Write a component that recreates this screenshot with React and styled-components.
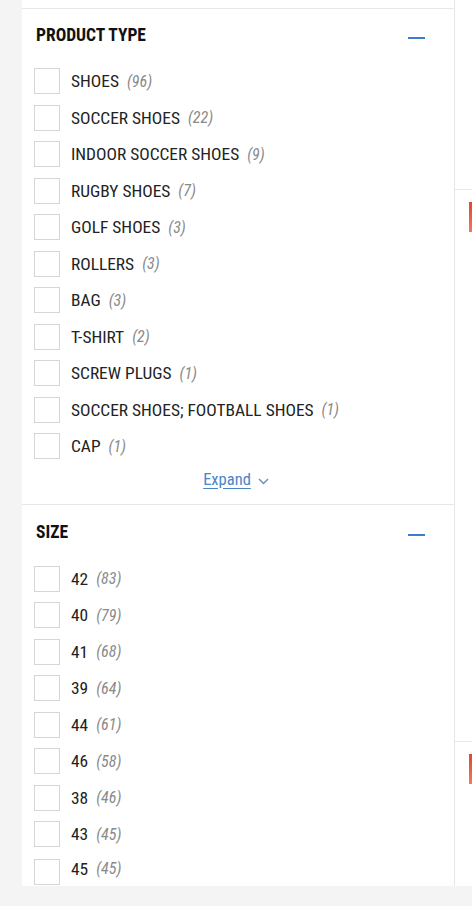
import React from 'react';
import styled, { createGlobalStyle } from 'styled-components';

const GlobalStyle = createGlobalStyle`
  html, body {
    margin: 0;
    padding: 0;
    background: #ffffff;
  }
  body {
    font-family: "Roboto Condensed", Roboto, "Liberation Sans", sans-serif;
    color: #222;
  }
`;

const Page = styled.div`
  width: 472px;
  background: #f4f4f4;
  padding: 0 0 20px 22px;
  box-sizing: border-box;
  display: flex;
`;

const Sidebar = styled.aside`
  width: 433px;
  background: #fff;
  border-right: 1px solid #e6e6e6;
  box-sizing: border-box;
`;

const TopStub = styled.div`
  height: 8px;
  border-bottom: 1px solid #e8e8e8;
`;

const Strip = styled.div`
  flex: 1;
  background: #fff;
  display: flex;
  flex-direction: column;
`;

const Cell = styled.div`
  height: ${p => (p.$h ? `${p.$h}px` : 'auto')};
  flex: ${p => (p.$h ? 'none' : '1')};
  border-bottom: ${p => (p.$h ? '1px solid #e8e8e8' : 'none')};
  position: relative;
`;

const RedEdge = styled.div`
  position: absolute;
  right: 0;
  top: 12px;
  width: 3px;
  height: 30px;
  background: linear-gradient(#e2462e, #f07a5a);
`;

const Section = styled.section`
  padding: 0 14px 0 12px;
  border-bottom: ${p => (p.$last ? 'none' : '1px solid #e6e6e6')};
  padding-bottom: ${p => (p.$last ? '0' : '15px')};
`;

const Head = styled.div`
  display: flex;
  align-items: center;
  justify-content: space-between;
  height: ${p => p.$h}px;
  padding-left: 2px;
`;

const Title = styled.h3`
  margin: 0 0 ${p => p.$lift || 0}px;
  font-size: 17.5px;
  font-weight: 700;
  color: #111;
`;

const Minus = styled.span`
  width: 17px;
  height: 2px;
  background: #3f7dc4;
  margin-right: 15px;
  margin-top: 4px;
`;

const List = styled.ul`
  list-style: none;
  margin: 0;
  padding: 0;
`;

const Row = styled.li`
  display: flex;
  align-items: center;
  height: 36.5px;
  box-sizing: border-box;

  ${List}.tight > &:last-child {
    height: 33px;
    align-items: flex-start;
    padding-top: 6px;
  }
`;

const Box = styled.span`
  width: 24px;
  height: 24px;
  border: 1px solid #d6d6d6;
  background: #fff;
  flex-shrink: 0;
`;

const Label = styled.span`
  margin-left: 11px;
  font-size: 17.4px;
  color: #222;
`;

const Count = styled.span`
  margin-left: 8px;
  font-size: 16px;
  font-style: italic;
  color: #8a8a8a;
`;

const ExpandWrap = styled.div`
  display: flex;
  justify-content: center;
  align-items: center;
  gap: 7px;
  padding-top: 5px;
  padding-right: 2px;
`;

const ExpandLink = styled.a`
  font-size: 16.5px;
  color: #4a86c6;
  text-decoration: underline;
  text-underline-offset: 3px;
  cursor: pointer;
`;

const Chevron = () => (
  <svg width="11" height="7" viewBox="0 0 11 7" style={{ marginTop: 5 }}>
    <path d="M1 1l4.5 4.5L10 1" fill="none" stroke="#6f8fb5" strokeWidth="1.5" />
  </svg>
);

const types = [
  ['SHOES', 96],
  ['SOCCER SHOES', 22],
  ['INDOOR SOCCER SHOES', 9],
  ['RUGBY SHOES', 7],
  ['GOLF SHOES', 3],
  ['ROLLERS', 3],
  ['BAG', 3],
  ['T-SHIRT', 2],
  ['SCREW PLUGS', 1],
  ['SOCCER SHOES; FOOTBALL SHOES', 1],
  ['CAP', 1],
];

const sizes = [
  ['42', 83],
  ['40', 79],
  ['41', 68],
  ['39', 64],
  ['44', 61],
  ['46', 58],
  ['38', 46],
  ['43', 45],
  ['45', 45],
];

const Options = ({ items, tight }) => (
  <List className={tight ? 'tight' : undefined}>
    {items.map(([name, n]) => (
      <Row key={name}>
        <Box />
        <Label>{name}</Label>
        <Count>({n})</Count>
      </Row>
    ))}
  </List>
);

export default function App() {
  return (
    <>
      <GlobalStyle />
      <Page>
        <Sidebar>
          <TopStub />
          <Section>
            <Head $h={54}>
              <Title $lift={3}>PRODUCT TYPE</Title>
              <Minus />
            </Head>
            <Options items={types} />
            <ExpandWrap>
              <ExpandLink>Expand</ExpandLink>
              <Chevron />
            </ExpandWrap>
          </Section>
          <Section $last>
            <Head $h={56}>
              <Title $lift={2}>SIZE</Title>
              <Minus />
            </Head>
            <Options items={sizes} tight />
          </Section>
        </Sidebar>
        <Strip>
          <Cell $h={189} />
          <Cell $h={551}>
            <RedEdge />
          </Cell>
          <Cell>
            <RedEdge />
          </Cell>
        </Strip>
      </Page>
    </>
  );
}
